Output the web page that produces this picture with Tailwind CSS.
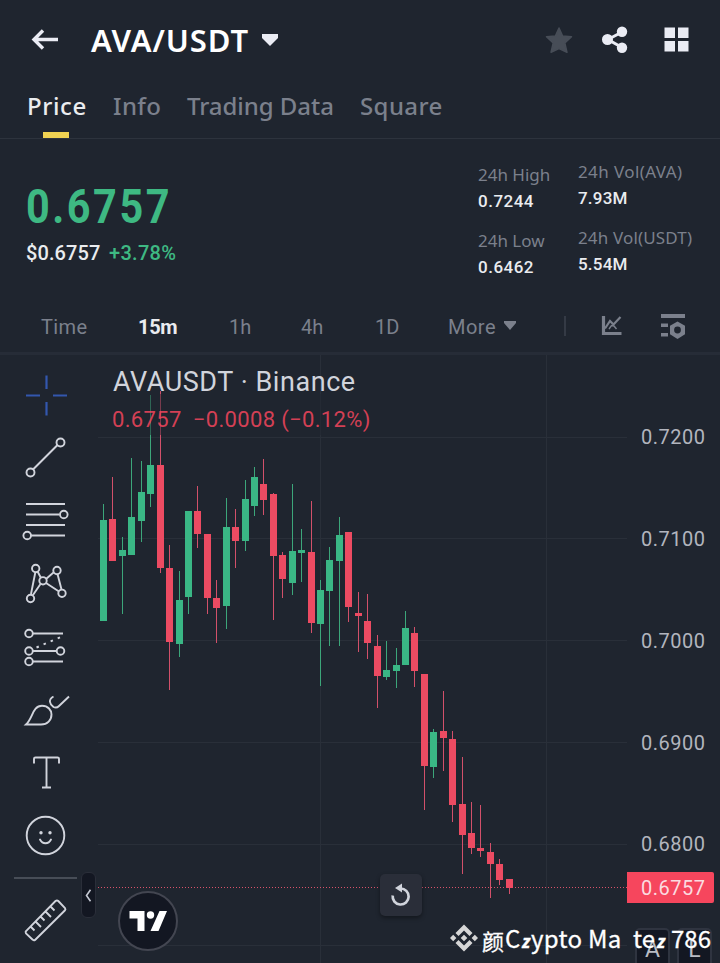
<!DOCTYPE html>
<html lang="en">
<head>
<meta charset="utf-8">
<title>AVA/USDT</title>
<script src="https://cdn.jsdelivr.net/npm/@tailwindcss/browser@4"></script>
</head>
<body class="bg-[#1f252f]">
<div class="w-[720px] h-[963px] overflow-hidden bg-[#1f252f] font-['Noto_Sans','Liberation_Sans',sans-serif] whitespace-nowrap flex flex-col text-[#eaecef]">

  <header class="h-[80px] shrink-0 flex items-center pl-[30px] pr-[30px]">
    <svg class="w-[30px] h-[30px]" viewBox="0 0 30 30" fill="none" stroke="#eaecf4" stroke-width="3.4"><path d="M28 14.5H4M13 5.500 4 14.5 13 23.500"/></svg>
    <h1 class="ml-[31px] w-[159px] text-[31px] leading-[40px] font-semibold text-white tracking-[0.9px]"><span>AVA/USDT</span></h1>
    <svg class="ml-[11px] w-[18px] h-[14px]" viewBox="0 0 18 14"><path d="M1 1H17V5L9 13 1 5Z" fill="#eaecf4"/></svg>
    <svg class="ml-auto w-[28px] h-[28px]" viewBox="0 0 28 28"><path d="M14 2 17.6 10 26.5 10.8 19.8 16.9 22 26.3 14 22.6 6 26.3 8.2 16.9 1.5 10.8 10.4 10Z" fill="#474d57" stroke="#474d57" stroke-width="1.5" stroke-linejoin="round"/></svg>
    <svg class="ml-[28px] w-[28px] h-[28px]" viewBox="0 0 28 28" fill="#eaecf4"><path d="M21 6 7 13.5 21 21.5" fill="none" stroke="#eaecf4" stroke-width="3"/><circle cx="21" cy="5.7" r="5.2"/><circle cx="6.5" cy="13.5" r="5.500"/><circle cx="21" cy="21.7" r="5.2"/></svg>
    <svg class="ml-[35px] w-[26px] h-[26px]" viewBox="0 0 26 26" fill="#eaecf4"><path d="M0.500 0.500h10.500v10.500H0.500zM14 0.500H24.500v10.500H14zM0.500 14h10.500V24.500H0.500zM14 14H24.500V24.500H14z"/></svg>
  </header>

  <nav class="h-[59px] shrink-0 flex border-b border-[#2d333d] pl-[27px] text-[24px] leading-[52px] font-medium text-[#7b808c]">
    <div class="w-[86px] text-[#eaecef] relative"><span class="tracking-[0.6px]">Price</span><i class="absolute left-[16px] top-[52px] w-[26px] h-[6px] bg-[#f0d252]"></i></div>
    <div class="w-[74px]"><span class="tracking-[0.4px]">Info</span></div>
    <div class="w-[173px]"><span class="tracking-[-0.05px]">Trading Data</span></div>
    <div><span class="tracking-[0.4px]">Square</span></div>
  </nav>

  <section class="h-[161px] shrink-0 flex pl-[26px]">
    <div class="w-[452px] pt-[38px] font-['Roboto',sans-serif]">
      <div class="text-[49px] leading-[60px] font-bold text-[#3eb983] tracking-[3px] origin-left scale-x-[0.845]">0.6757</div>
      <div class="mt-[3px] flex text-[20px] leading-[26px] font-medium"><span class="w-[83px] tracking-[0.1px]">$0.6757</span><span class="text-[#3eb983] tracking-[0.3px]">+3.78%</span></div>
    </div>
    <div class="w-[100px] pt-[23px] text-[17px]">
      <div class="leading-[25px] text-[#7b808c]">24h High</div>
      <div class="h-[41px] pt-[2px] leading-[24px] font-['Roboto',sans-serif] font-medium tracking-[0.5px]">0.7244</div>
      <div class="leading-[25px] text-[#7b808c]">24h Low</div>
      <div class="pt-[2px] leading-[24px] font-['Roboto',sans-serif] font-medium tracking-[0.5px]">0.6462</div>
    </div>
    <div class="pt-[20px] text-[17px]">
      <div class="leading-[25px] text-[#7b808c] tracking-[0.4px]">24h Vol(AVA)</div>
      <div class="h-[41px] pt-[2px] leading-[24px] font-['Roboto',sans-serif] font-medium tracking-[0.2px]">7.93M</div>
      <div class="leading-[25px] text-[#7b808c] tracking-[0.15px]">24h Vol(USDT)</div>
      <div class="pt-[2px] leading-[24px] font-['Roboto',sans-serif] font-medium tracking-[0.2px]">5.54M</div>
    </div>
  </section>

  <div class="h-[52px] shrink-0 flex items-center pl-[41px] text-[20px] text-[#7b808c] font-['Roboto',sans-serif]">
    <span class="w-[97px] pt-[2px] tracking-[0.4px]">Time</span>
    <span class="w-[91px] pt-[2px] font-bold text-[#eaecef] tracking-[-0.3px]">15m</span>
    <span class="w-[72px] pt-[2px]">1h</span>
    <span class="w-[74px] pt-[2px]">4h</span>
    <span class="w-[73px] pt-[2px]">1D</span>
    <span class="w-[55px] pt-[2px] tracking-[0.5px]">More</span>
    <svg class="w-[14px] h-[10px]" viewBox="0 0 14 10"><path d="M1 0H13V2L7 9 1 2Z" fill="#7b808c"/></svg>
    <i class="ml-[47px] w-[2px] h-[20px] bg-[#343a45]"></i>
    <svg class="ml-[35px] w-[22px] h-[22px]" viewBox="0 0 22 22" fill="none" stroke="#7b808c"><path d="M2.500 1V18.500H20.500" stroke-width="3.2"/><path d="M4 13.500 9 6 12.500 9.500 19.500 2" stroke-width="2.200"/><path d="M8 14 10.500 10.500 13 11 15.500 14" stroke-width="1.400"/></svg>
    <svg class="ml-[37px] w-[26px] h-[28px]" viewBox="0 0 26 28" fill="#7b808c"><path d="M1 2H25V6H1zM1 11.500H8V15H1zM1 21H8V24.500H1zM17.500 9.500 25 13.800V22.200L17.500 27 10 22.200V13.800Z"/><circle cx="17.500" cy="18" r="3.400" fill="#1f252f"/></svg>
  </div>

  <main class="h-[611px] shrink-0 border-t-[3px] border-[#262c37] flex relative">
    <svg class="w-[98px] h-[608px] shrink-0" viewBox="0 355 98 608" fill="none" stroke="#d1d4dc" stroke-width="1.900">
      <path d="M46.500 375.500V389M46.500 402V415.500M26 395.500H40M53 395.500H67" stroke="#3357ae" stroke-width="2.200"/>
      <g><path d="M33 469.500 57.500 445"/><circle cx="30.500" cy="472.500" r="4"/><circle cx="60.500" cy="442.500" r="4"/></g>
      <g><path d="M26 504H65M26 514.500H59.500M26 525H65M31 535.500H65"/><circle cx="63.800" cy="514.500" r="3.800"/><circle cx="27.200" cy="535.500" r="3.800"/></g>
      <g><path d="M35.300 572.500 31 594M37.700 571.800 41 578M33 595 40.500 584M46 579 53.500 572.500M57.500 574 61.500 589.500M46 583 59 591.500"/><circle cx="35.700" cy="568.500" r="3.700"/><circle cx="57" cy="570.500" r="3.700"/><circle cx="43" cy="580.800" r="3.700"/><circle cx="30.500" cy="598.500" r="3.700"/><circle cx="62" cy="593.300" r="3.700"/></g>
      <g><path d="M33 633.500H63M33 651H56M33 661.500H63"/><path d="M36.500 647.500 63 636" stroke-dasharray="2.500 5.200" stroke-width="2"/><circle cx="29" cy="633.500" r="3.800"/><circle cx="29" cy="651" r="3.800"/><circle cx="60.500" cy="651" r="3.800"/><circle cx="29" cy="661.500" r="3.800"/></g>
      <path d="M26 724.500C33 718 32.500 705.800 42 705.800 48 705.800 51.500 710 51.500 714.500 51.500 720 47.500 724.500 41 724.500ZM53.500 696.500C48 699.500 49.500 704 53.500 707 55.500 708 57.500 707.500 59 706L69 696.500"/>
      <path d="M34 763.500V758.800Q34 757.500 35.500 757.500H57.500Q59 757.500 59 758.800V763.500M46.500 757.500V787.500M42 787.500H51"/>
      <g><circle cx="45.500" cy="835.500" r="18.800"/><path d="M40 839.500C42.500 844.500 48.500 844.500 51 839.500" stroke-linecap="round"/><g fill="#d1d4dc" stroke="none"><circle cx="41" cy="832.800" r="1.700"/><circle cx="50" cy="832.800" r="1.700"/></g></g>
      <path d="M14 878H77" stroke="#474d57" stroke-width="2"/>
      <path d="M26 933.500Q25 932 26.300 930.800L55.500 901Q57 899.800 58.300 901L65 908Q66 909.300 64.800 910.500L35.300 939.700Q34 941 32.700 939.700ZM31 927 34.500 930.500M36 922 41 927M41 917 44.500 920.500M46 912 51 917M51 907 54.500 910.500"/>
    </svg>

    <svg class="w-[529px] h-[608px] shrink-0" viewBox="98 355 529 608" fill="none">
      <path d="M98 437.500H627M98 538.500H627M98 640.500H627M98 742.500H627M98 844.500H627M98 945.500H627M320.500 355V963M546.500 355V963" stroke="#292f39"/>
      <path d="M98 887.500H627" stroke="#d8526a" stroke-dasharray="1 2"/>
      <g id="candles" shape-rendering="crispEdges"></g>
    </svg>

    <div class="w-[93px] shrink-0 flex flex-col font-['Roboto',sans-serif] text-[20px] text-[#b2b5be]">
      <div class="pl-[14px] pt-[69px] tracking-[0.500px]">
        <div class="h-[102px] leading-[26px]">0.7200</div>
        <div class="h-[102px] leading-[26px]">0.7100</div>
        <div class="h-[102px] leading-[26px]">0.7000</div>
        <div class="h-[101px] leading-[26px]">0.6900</div>
        <div class="h-[41px] leading-[26px]">0.6800</div>
      </div>
      <div class="w-[87px] h-[31px] leading-[32px] pl-[14px] rounded-r-[2px] bg-[#f6465d] text-[#fbdbe0] tracking-[0.500px]">0.6757</div>
    </div>

    <div class="absolute left-[113px] top-[10px] font-['Roboto',sans-serif]">
      <div class="text-[27px] leading-[34px] text-[#d1d4dc] tracking-[0.550px]">AVAUSDT · Binance</div>
      <div class="-mt-[5px] -ml-[1px] h-[41px] pt-[12px] flex gap-[11px] bg-[#1f252f]/50 text-[22px] leading-[28px] text-[#f6465d]/85 tracking-[0.350px]"><span>0.6757</span><span>−0.0008 (−0.12%)</span></div>
    </div>

    <div class="absolute left-[81px] top-[517px] w-[15px] h-[46px] rounded-[6px] bg-[#131722] border border-[#2a2e39] flex items-center justify-center">
      <svg class="w-[7px] h-[13px]" viewBox="0 0 7 13" fill="none" stroke="#c5c9d3" stroke-width="1.600"><path d="M5.500 0.800 1.500 6.500 5.500 12.200"/></svg>
    </div>

    <div class="absolute left-[118px] top-[536px] w-[60px] h-[60px] rounded-full bg-[#131722] border-2 border-[#434651] flex items-center justify-center">
      <svg class="w-[38px] h-[20px]" viewBox="0 0 38 20" fill="#fff"><path d="M0.500 0H15.500V20H8.500V7.500H0.500zM30.500 0H38L29.500 20H21.500Z"/><circle cx="21.500" cy="4" r="3.700"/></svg>
    </div>

    <div class="absolute left-[380px] top-[519px] w-[42px] h-[42px] rounded-[5px] bg-[#2a2e39] shadow-[0_2px_4px_rgba(0,0,0,0.4)] flex items-center justify-center">
      <svg class="w-[22px] h-[24px]" viewBox="0 0 22 24"><path d="M2.700 12.500A8 8 0 1 0 10.500 5.500" fill="none" stroke="#d1d4dc" stroke-width="2.700"/><path d="M12 0.500V9.500L5 5Z" fill="#d1d4dc"/></svg>
    </div>

    <div class="absolute left-[635px] top-[573px] flex gap-[7px] font-['Roboto',sans-serif] text-[23px] leading-[39px] text-[#b9bcc4] text-center">
      <div class="w-[35px] h-[40px] rounded-[5px] border-2 border-[#2f3440] bg-[#131722]">A</div>
      <div class="w-[35px] h-[40px] rounded-[5px] border-2 border-[#2f3440] bg-[#131722]">L</div>
    </div>

    <div class="absolute left-[450px] top-[567px] flex items-center h-[32px] text-white text-[24px] leading-[32px] font-['Noto_Sans_CJK_SC','Noto_Sans',sans-serif] [-webkit-text-stroke:0.3px_white]">
      <svg class="w-[28px] h-[28px] shrink-0" viewBox="0 0 28 28" fill="#d6d6d6"><path d="M14 0.500 22.500 9 19.500 12 14 6.500 8.500 12 5.500 9zM14 27.500 22.500 19 19.500 16 14 21.500 8.500 16 5.500 19zM3.200 10.800 6.400 14 3.200 17.200 0 14zM24.800 10.800 28 14 24.800 17.200 21.600 14zM14 10.700 17.300 14 14 17.300 10.700 14z"/></svg>
      <span class="w-[23px] ml-[4px] text-[22px] pt-[4px]">颜</span>
      <span class="w-[17px]">C</span>
      <span class="w-[9px] text-[18px] font-bold italic pt-[6px] font-['Noto_Sans',sans-serif]">z</span>
      <span class="w-[102px] tracking-[0.3px]">ypto Ma</span>
      <span class="w-[24px]">te</span>
      <span class="w-[14px] text-[18px] font-bold italic pt-[6px] font-['Noto_Sans',sans-serif]">z</span>
      <span>786</span>
    </div>
  </main>
</div>
<script>
// Each candle: center x, high, body top, body bottom, low, direction (1 = up)
const candles = [
[103.5,504,520,621,621,1],[112.5,477,519,561,561,0],[122.5,537,550,556,614,1],[131.5,458,517,555,555,1],
[141.5,461,492,521,542,1],[150.5,395,465,494,507,1],[160.5,391,465,568,573,0],[169.5,545,568,642,690,0],
[179.5,571,600,644,657,1],[188.5,511,511,597,614,1],[197.5,486,511,534,548,0],[207.5,534,534,598,614,0],
[216.5,580,598,608,643,0],[226.5,498,527,606,629,1],[235.5,509,527,541,568,0],[245.5,480,499,541,551,1],
[254.5,467,477,506,516,1],[263.5,459,484,500,515,0],[273.5,493,494,556,620,0],[282.5,552,555,579,598,0],
[292.5,484,551,583,595,1],[301.5,529,550,553,582,1],[311.5,501,552,623,633,0],[320.5,580,590,624,686,1],
[329.5,547,560,591,646,1],[339.5,517,535,561,646,1],[348.5,532,532,607,622,0],[358.5,592,613,616,652,0],
[367.5,594,621,643,659,0],[377.5,635,646,676,708,0],[386.5,641,670,677,680,1],[396.5,648,665,671,688,1],
[405.5,611,628,665,665,1],[414.5,627,633,671,687,0],[424.5,674,674,766,810,0],[433.5,729,732,767,778,1],
[443.5,691,731,738,771,0],[452.5,731,739,805,822,0],[462.5,757,804,835,874,0],[471.5,802,833,848,854,0],
[480.5,805,848,851,857,0],[490.5,843,852,864,898,0],[499.5,859,864,880,885,0],[509.5,879,879,888,894,0]];
document.getElementById('candles').innerHTML = candles.map(([x,h,t,b,l,up]) => {
  const c = up ? '#3ab785' : '#ec4b62';
  const w = up ? '#3ca67a' : '#d2506a';
  return `<rect x="${x-.5}" y="${h}" width="1" height="${l-h}" fill="${w}"/><rect x="${x-3.5}" y="${t}" width="7" height="${b-t}" fill="${c}"/>`;
}).join('');
</script>
</body>
</html>
